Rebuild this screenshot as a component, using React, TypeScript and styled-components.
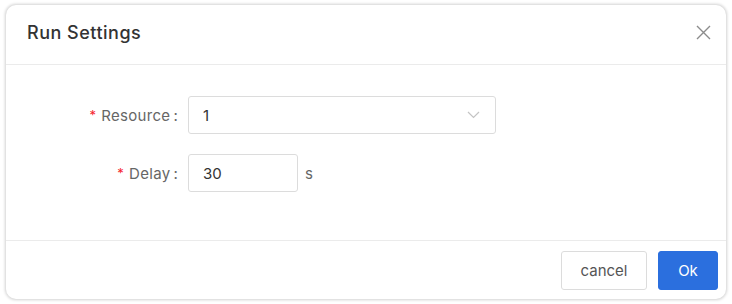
import React from 'react';
import styled, {createGlobalStyle} from 'styled-components';

const GlobalStyle = createGlobalStyle`
  html, body {
    margin: 0;
    padding: 0;
    background: #ffffff;
  }
  body {
    font-family: Inter, "Liberation Sans", Arial, sans-serif;
  }
  * {
    box-sizing: border-box;
  }
`;

const App: React.FC = () => {
    return (
        <>
            <GlobalStyle/>
            <Page>
                <Modal>
                    <Header>
                        <Title>Run Settings</Title>
                        <CloseButton aria-label="close">
                            <svg width="15" height="15" viewBox="0 0 15 15">
                                <path d="M1 1 L14 14 M14 1 L1 14" stroke="#8c8c8c" strokeWidth="1.4" fill="none"/>
                            </svg>
                        </CloseButton>
                    </Header>
                    <Body>
                        <FormRow>
                            <Label><Star>*</Star>Resource<Colon>:</Colon></Label>
                            <Select>
                                <span>1</span>
                                <svg width="13" height="8" viewBox="0 0 13 8">
                                    <path d="M1 1 L6.5 6.5 L12 1" stroke="#c4c4c4" strokeWidth="1.2" fill="none"/>
                                </svg>
                            </Select>
                        </FormRow>
                        <FormRow>
                            <Label><Star>*</Star>Delay<Colon>:</Colon></Label>
                            <Input defaultValue="30"/>
                            <Unit>s</Unit>
                        </FormRow>
                    </Body>
                    <Footer>
                        <Button>cancel</Button>
                        <Button primary>Ok</Button>
                    </Footer>
                </Modal>
            </Page>
        </>
    );
};

const Page = styled.div`
  width: 732px;
  height: 304px;
  padding: 5px 6px 5px 6px;
`;

const Modal = styled.div`
  width: 720px;
  height: 294px;
  background: #ffffff;
  border-radius: 10px;
  box-shadow: 0 0 3px 1px rgba(0, 0, 0, 0.18);
  display: flex;
  flex-direction: column;
  overflow: hidden;
`;

const Header = styled.div`
  height: 60px;
  display: flex;
  align-items: center;
  justify-content: space-between;
  padding: 0 14px 5px 21px;
  border-bottom: 1px solid #ebebeb;
`;

const Title = styled.div`
  font-size: 18px;
  font-weight: 500;
  color: #333333;
  letter-spacing: 0.5px;
`;

const CloseButton = styled.button`
  background: none;
  border: none;
  padding: 0;
  width: 17px;
  height: 17px;
  display: flex;
  align-items: center;
  justify-content: center;
  cursor: pointer;
`;

const Body = styled.div`
  flex: 1;
  display: flex;
  flex-direction: column;
  gap: 20px;
  padding: 31px 0 0 0;
  border-bottom: 1px solid #ebebeb;
`;

const FormRow = styled.div`
  display: flex;
  align-items: center;
  height: 38px;
`;

const Label = styled.label`
  width: 182px;
  padding-right: 10px;
  display: flex;
  justify-content: flex-end;
  align-items: center;
  font-size: 15px;
  letter-spacing: 0.3px;
  color: #666666;
`;

const Star = styled.span`
  color: #f5222d;
  margin-right: 5px;
  font-size: 13px;
`;

const Colon = styled.span`
  margin-left: 3px;
`;

const Select = styled.div`
  width: 308px;
  height: 38px;
  border: 1px solid #dcdcdc;
  border-radius: 3px;
  display: flex;
  align-items: center;
  justify-content: space-between;
  padding: 0 15px 0 14px;
  font-size: 15px;
  color: #333333;
`;

const Input = styled.input`
  width: 110px;
  height: 38px;
  border: 1px solid #dcdcdc;
  border-radius: 3px;
  padding: 0 14px;
  font-family: inherit;
  font-size: 15px;
  color: #333333;
  outline: none;
`;

const Unit = styled.span`
  margin-left: 7px;
  font-size: 15px;
  color: #666666;
`;

const Footer = styled.div`
  height: 58px;
  display: flex;
  align-items: center;
  justify-content: flex-end;
  gap: 11px;
  padding: 0 8px 0 0;
`;

const Button = styled.button<{ primary?: boolean }>`
  height: 39px;
  min-width: ${(props) => props.primary ? '60px' : '86px'};
  padding: 0 16px;
  border-radius: 3px;
  font-family: inherit;
  font-size: 15px;
  cursor: pointer;
  border: 1px solid ${(props) => props.primary ? '#2b6fde' : '#dcdcdc'};
  background: ${(props) => props.primary ? '#2b6fde' : '#ffffff'};
  color: ${(props) => props.primary ? '#ffffff' : '#555555'};
`;

export default App;
